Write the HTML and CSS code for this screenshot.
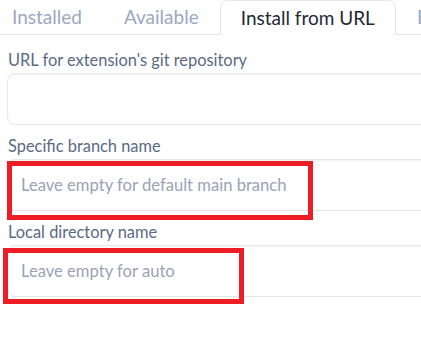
FILE: index.html
```html
<!DOCTYPE html>
<html>
<head>
<meta charset="utf-8">
<link rel="stylesheet" href="styles.css">
</head>
<body>
<div class="page">
  <div class="tabs">
    <div class="tab">Installed</div>
    <div class="tab">Available</div>
    <div class="tab active">Install from URL</div>
    <div class="tab">Backup/Restore</div>
  </div>
  <div class="form">
    <div class="field">
      <label class="label">URL for extension's git repository</label>
      <div class="input"></div>
    </div>
    <div class="field">
      <label class="label">Specific branch name</label>
      <div class="input"><span class="ph">Leave empty for default main branch</span><div class="mark mark-branch"></div></div>
    </div>
    <div class="field">
      <label class="label">Local directory name</label>
      <div class="input"><span class="ph">Leave empty for auto</span><div class="mark mark-dir"></div></div>
    </div>
  </div>
</div>
</body>
</html>
```
FILE: styles.css
```css
html, body {
  margin: 0;
  padding: 0;
  background: #ffffff;
  overflow: hidden;
}
body {
  font-family: "Lato", "Liberation Sans", sans-serif;
  width: 421px;
  height: 349px;
}
.page {
  width: 480px;
}
.tabs {
  display: flex;
  height: 34px;
  border-bottom: 1px solid #e5e7eb;
  margin-left: -9px;
}
.tab {
  padding: 0 21px;
  line-height: 34px;
  font-size: 19px;
  color: #9ba8c0;
  white-space: nowrap;
  flex: none;
}
.tab.active {
  color: #1f2937;
  background: #fff;
  border: 1px solid #e5e7eb;
  border-bottom: none;
  border-radius: 8px 8px 0 0;
  height: 35px;
  margin-bottom: -1px;
  padding: 0 20px;
  box-sizing: border-box;
}
.form {
  padding: 15px 0 0 7px;
  display: flex;
  flex-direction: column;
  gap: 11px;
}
.field {
  display: flex;
  flex-direction: column;
  gap: 3px;
}
.label {
  font-size: 16.4px;
  color: #5a6a84;
  padding-left: 1px;
  line-height: 20px;
}
.input {
  position: relative;
  height: 50px;
  border: 1px solid #e5e7eb;
  border-radius: 8px;
  box-shadow: inset 0 1px 2px rgba(0,0,0,0.05);
  display: flex;
  align-items: center;
  padding-left: 13px;
}
.ph {
  font-size: 16.6px;
  color: #9aa3b6;
}
.mark {
  position: absolute;
  box-sizing: border-box;
  border: 5px solid #ee1c25;
}
.mark-branch {
  left: -1px;
  top: 1px;
  width: 306px;
  height: 59px;
}
.mark-dir {
  left: -5px;
  top: 2px;
  width: 241px;
  height: 56px;
}
```
